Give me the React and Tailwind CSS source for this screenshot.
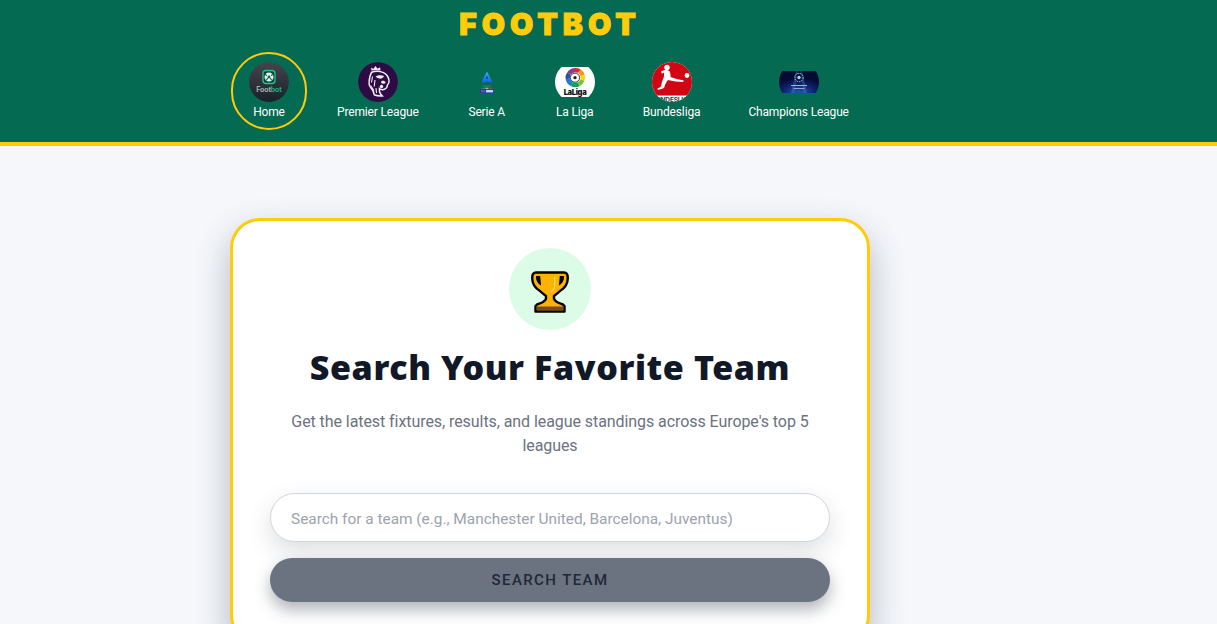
const uiFont = "font-['Roboto',sans-serif]";

function FootbotLogo() {
  return (
    <svg viewBox="0 0 40 40" className="w-10 h-10">
      <defs>
        <linearGradient id="fb" x1="0" y1="0" x2="0" y2="1">
          <stop offset="0" stopColor="#43464d" />
          <stop offset="1" stopColor="#1b1f2a" />
        </linearGradient>
      </defs>
      <circle cx="20" cy="20" r="20" fill="url(#fb)" />
      <rect x="14" y="8.500" width="12" height="13" rx="3" fill="#0d3f36" stroke="#22c58b" strokeWidth="1.300" />
      <circle cx="20" cy="15" r="4.500" fill="#dff3ec" />
      <circle cx="20" cy="15" r="1.400" fill="#1b5d4b" />
      <path d="M16 12.500l2 1M24 12.500l-2 1M17 18.500l1.800-2.300M23 18.500l-1.800-2.300" stroke="#1b5d4b" strokeWidth="1.100" />
      <text x="20" y="29.500" textAnchor="middle" fontSize="7" fontWeight="700" fontFamily="Inter, sans-serif" fill="#a9adb3">
        Foot<tspan fill="#1fae7c">bot</tspan>
      </text>
    </svg>
  );
}

function PremierLogo() {
  return (
    <svg viewBox="0 0 40 40" className="w-10 h-10">
      <circle cx="20" cy="20" r="20" fill="#2e0b45" />
      <path d="M13.500 8.500l-.5-3 2.300 1.400L17.500 4l2 2.800L22 5.200l.5 3.300c-3-.8-6-.8-9 0z" fill="#f2ecf5" />
      <path
        d="M13 10.500c4-1.600 9-1.500 12.500.2 3 1.500 5 4.300 5.500 7.800.3 2-.2 3.400-1.500 4.300-.2 2.600-1.500 4.200-3.800 4.700-1.800.4-3.200-.1-4.300-1-.3 2.700.6 5.400 2.800 7.400-3 .3-5.800-.2-8-1.100-.3-3-1.700-5.300-3.600-7.300-1.500-1.600-1.800-3.500-1.500-5.600.3-3.300 1-7 2.400-9.400z"
        fill="none"
        stroke="#f2ecf5"
        strokeWidth="1.500"
      />
      <path d="M17.500 14.500c2.600-1.600 6.300-1.800 8.500-.4-1 2.300-3.200 3-5 2.500-1.300-.4-2.400-1-3.500-2.100z" fill="#f2ecf5" />
      <path d="M23.500 19c1.700-.6 3.600 0 4.200 1.400-1 1.700-3.600 1.700-4.600.4z" fill="#f2ecf5" />
      <circle cx="23.500" cy="24.500" r="1.700" fill="#f2ecf5" />
      <path d="M14.500 14.500l-1 6M17 18l-.8 6.500M12.500 23.500l3.500 5M18 26l.5 5" stroke="#f2ecf5" strokeWidth="1.100" />
    </svg>
  );
}

function SerieALogo() {
  return (
    <svg viewBox="0 0 40 40" className="w-10 h-10">
      <defs>
        <linearGradient id="sa" x1="0" y1="0" x2="0" y2="1">
          <stop offset="0" stopColor="#35b4f7" />
          <stop offset="1" stopColor="#0d5ae0" />
        </linearGradient>
      </defs>
      <path d="M20 9.500l5 9.500-.5 2.500-3.500-1.800h-2l-3.500 1.800-.5-2.500z" fill="url(#sa)" />
      <path d="M20 13.500l1.300 3.300h-2.600z" fill="#0a3a9a" />
      <rect x="16" y="23.500" width="8" height="1" fill="#3d7d6d" />
      <rect x="14.500" y="25.800" width="4" height="0.900" fill="#3f9a5d" />
      <rect x="18.500" y="25.800" width="3" height="0.900" fill="#d8dbe0" />
      <rect x="21.500" y="25.800" width="4" height="0.900" fill="#b8434a" />
      <rect x="13" y="27" width="14" height="4.400" fill="#1b3fae" />
      <rect x="14" y="28" width="4" height="2.400" fill="#7a3ea8" />
      <rect x="19" y="28" width="7" height="2.400" fill="#c9d3ef" />
    </svg>
  );
}

function LaLigaLogo() {
  const arcs = [
    ["#e5262e", "M20 5.500a9 9 0 0 1 5 1.300l-2 3.400a5 5 0 0 0-3-.7z"],
    ["#f7941d", "M25 6.800a9 9 0 0 1 3.800 5.200l-3.800 1a5 5 0 0 0-2-2.800z"],
    ["#ffd200", "M28.800 12a9 9 0 0 1-.2 5.400l-3.700-1.300a5 5 0 0 0 .1-3.100z"],
    ["#7ac143", "M28.600 17.400a9 9 0 0 1-4.600 5l-1.700-3.600a5 5 0 0 0 2.600-2.700z"],
    ["#00a651", "M24 22.400a9 9 0 0 1-7.500 0l1.700-3.600a5 5 0 0 0 4.100 0z"],
    ["#1d7fc4", "M16.500 22.400a9 9 0 0 1-5-6.400l3.900-.7a5 5 0 0 0 2.800 3.500z"],
    ["#2b4fa2", "M11.500 16a9 9 0 0 1 1.400-6.600l3.200 2.300a5 5 0 0 0-.7 3.600z"],
    ["#8e3a96", "M12.900 9.400A9 9 0 0 1 20 5.500v4a5 5 0 0 0-3.900 2.200z"],
  ];
  return (
    <svg viewBox="0 0 40 40" className="w-10 h-10">
      <rect x="0" y="5" width="40" height="30" fill="#fff" />
      <g transform="translate(-2 0) scale(1.100 1.080)">
        {arcs.map(([color, d]) => (
          <path key={color} d={d} fill={color} />
        ))}
        <circle cx="20" cy="14.500" r="4.200" fill="#fff" stroke="#222" strokeWidth="0.800" />
        <circle cx="20" cy="14.500" r="1.500" fill="#222" />
      </g>
      <text x="20" y="33" textAnchor="middle" fontSize="7.500" fontWeight="900" fontFamily="Inter, sans-serif" letterSpacing="-0.300" fill="#111">
        LaLiga
      </text>
    </svg>
  );
}

function BundesligaLogo() {
  return (
    <svg viewBox="0 0 40 40" className="w-10 h-10">
      <rect width="40" height="40" fill="#fff" />
      <path d="M0 0h40v33.500H0z" fill="#d20515" />
      <circle cx="15" cy="5.500" r="2.700" fill="#fff" />
      <path d="M9 9.500c2-1.600 6-2.200 8-.8 1.600 1.100 1.400 4 1.600 6.200 3.600 1.600 8.400 2.600 13 3.400l-.3 1.600c-4.800 0-10.800-.4-15.300-1.800-1.500 1.600-3 4.400-3.800 7.600-1.600 1-3.800 1.800-6.400 2l-.4-1.200c1.600-.6 3-1.400 3.800-2.600.4-3.200 1.400-6.400 2.700-9 .2-1.600.2-3 .2-4.300-.7.300-1.400.8-2.200 1.200z" fill="#fff" />
      <circle cx="35" cy="13.500" r="2.400" fill="#fff" />
      <text x="20" y="39.500" textAnchor="middle" fontSize="6.500" fontWeight="700" fontFamily="Inter, sans-serif" fill="#333">
        BUNDESLIGA
      </text>
    </svg>
  );
}

function ChampionsLogo() {
  return (
    <svg viewBox="0 0 40 40" className="w-10 h-10">
      <defs>
        <radialGradient id="cl" cx="0.500" cy="1" r="0.700">
          <stop offset="0" stopColor="#2456ad" />
          <stop offset="0.600" stopColor="#0b2168" />
          <stop offset="1" stopColor="#030a33" />
        </radialGradient>
      </defs>
      <rect x="0" y="9" width="40" height="22" fill="url(#cl)" />
      <path d="M12 31l5-22h1.500l-3 22zM28 31l-5-22h-1.500l3 22z" fill="#4f86d6" opacity="0.350" />
      <circle cx="20" cy="15.500" r="4.200" fill="none" stroke="#b9c8e0" strokeWidth="1" strokeDasharray="1.500 1" />
      <circle cx="20" cy="15.500" r="1.700" fill="#b9c8e0" />
      <rect x="12" y="23" width="16" height="1" fill="#9db2d8" />
      <rect x="14.500" y="26" width="11" height="1" fill="#8ea5cf" />
    </svg>
  );
}

const leagues = [
  { name: 'Home', Logo: FootbotLogo, active: true },
  { name: 'Premier League', Logo: PremierLogo },
  { name: 'Serie A', Logo: SerieALogo },
  { name: 'La Liga', Logo: LaLigaLogo },
  { name: 'Bundesliga', Logo: BundesligaLogo },
  { name: 'Champions League', Logo: ChampionsLogo },
];

function NavItem({ name, Logo, active }) {
  return (
    <a
      href="#"
      className={`flex flex-col items-center gap-[2px] rounded-full border-2 px-4 py-2 text-xs leading-4 tracking-[-0.15px] text-white whitespace-nowrap ${
        active ? 'border-[#ffcc0b]' : 'border-transparent'
      }`}
    >
      <span className="block w-10 h-10 rounded-full overflow-hidden">
        <Logo />
      </span>
      {name}
    </a>
  );
}

function Trophy() {
  return (
    <svg viewBox="0 0 38 42" className="mt-[5px] w-[38px] h-[42px]">
      <path
        d="M5 1.500H33C35.500 1.500 36.800 3.500 36.800 7C36.800 12 34 17 29 20C27 22 25 23.500 23 25L23 28C24 30 27 32 32 33.500L33.500 35V40.500H4.500V35L6 33.500C11 32 14 30 15 28L15 25C13 23.500 11 22 9 20C4 17 1.200 12 1.200 7C1.200 3.500 2.500 1.500 5 1.500Z"
        fill="#ffb300"
        stroke="#000"
        strokeWidth="2.400"
        strokeLinejoin="round"
      />
      <path d="M5 5h4.200l.9 9.500C6.600 12.500 4.700 9 5 5zM33 5h-4.200l-.9 9.500C31.400 12.500 33.300 9 33 5z" fill="#000" />
      <path d="M6 35.500h26v4H6z" fill="#7b4a23" />
      <path d="M23.700 6v8c0 3-1 5-3.200 6.300" fill="none" stroke="#ffd98a" strokeWidth="1.200" strokeLinecap="round" />
    </svg>
  );
}

export default function App() {
  return (
    <div className={`h-[624px] overflow-hidden bg-[#f5f7fb] ${uiFont}`}>
      <header className="h-[146px] bg-[#046a52] border-b-4 border-[#ffcc0b]">
        <div className="w-[640px] ml-[230px]">
          <h1 className="pt-[4px] text-center text-[30px] leading-[40px] font-black tracking-[5px] text-[#ffcc0b] [-webkit-text-stroke:1px_#ffcc0b] font-['Inter',sans-serif]">
            FOOTBOT
          </h1>
          <nav className="mt-2 flex gap-3 pl-px">
            {leagues.map((l) => (
              <NavItem key={l.name} {...l} />
            ))}
          </nav>
        </div>
      </header>

      <main className="w-[640px] ml-[230px] mt-[72px]">
        <section className="flex flex-col items-center rounded-[30px] border-[3px] border-[#ffcc0b] bg-white px-[37px] pt-[27px] pb-10 shadow-[0_15px_35px_rgba(31,41,55,0.3)]">
          <div className="flex h-[82px] w-[82px] items-center justify-center rounded-full bg-[#dcfce7]">
            <Trophy />
          </div>
          <h2 className="mt-[14px] text-[34px] leading-[46px] font-black tracking-[0.6px] text-[#111827] font-['Noto_Sans',sans-serif]">
            Search Your Favorite Team
          </h2>
          <p className="mt-5 text-center text-base leading-6 tracking-[-0.07px] text-[#6b7280]">
            Get the latest fixtures, results, and league standings across Europe's top 5 leagues
          </p>
          <input
            type="text"
            placeholder="Search for a team (e.g., Manchester United, Barcelona, Juventus)"
            className="mt-[35px] h-[49px] w-full rounded-full border border-[#d1d5db] bg-white px-5 pt-[2px] text-[15.4px] text-[#111827] placeholder:text-[#9ca3af] shadow-[0_10px_25px_rgba(31,41,55,0.15)] outline-none"
          />
          <button
            type="button"
            className="mt-4 h-11 w-full rounded-full bg-[#6b7280] text-[15px] font-medium tracking-[1.4px] text-[#1f2937] shadow-[0_8px_16px_rgba(31,41,55,0.35)]"
          >
            SEARCH TEAM
          </button>
        </section>
      </main>
    </div>
  );
}
